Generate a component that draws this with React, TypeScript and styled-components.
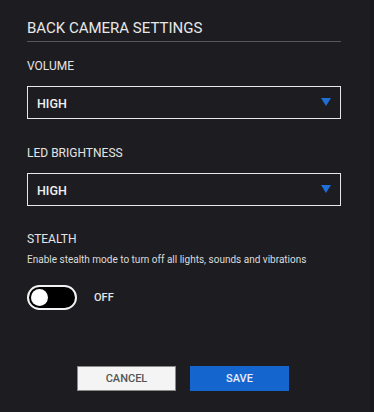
import { useState } from "react"
import styled, { createGlobalStyle } from "styled-components"

const GlobalStyle = createGlobalStyle`
  html, body {
    margin: 0;
    padding: 0;
    background: #1d1d21;
  }
  body {
    font-family: Roboto, "Liberation Sans", Arial, sans-serif;
  }
`

interface SelectFieldProps {
  label: string
  value: string
}

const SelectField = (props: SelectFieldProps) => {
  const { label, value } = props
  return (
    <Field>
      <FieldLabel>{label}</FieldLabel>
      <SelectBox>
        <SelectValue>{value}</SelectValue>
        <Caret viewBox="0 0 10 8">
          <path d="M0 0 H10 L5 8 Z" fill="#1f6fd6" />
        </Caret>
      </SelectBox>
    </Field>
  )
}

const App = () => {
  const [stealth, setStealth] = useState(false)

  return (
    <>
      <GlobalStyle />
      <Page>
        <Panel>
          <Title>BACK CAMERA SETTINGS</Title>
          <SelectField label="VOLUME" value="HIGH" />
          <SelectField label="LED BRIGHTNESS" value="HIGH" />
          <StealthSection>
            <FieldLabel>STEALTH</FieldLabel>
            <Hint>Enable stealth mode to turn off all lights, sounds and vibrations</Hint>
            <ToggleRow>
              <Toggle $on={stealth} onClick={() => setStealth((prev) => !prev)}>
                <Knob $on={stealth} />
              </Toggle>
              <ToggleText>{stealth ? "ON" : "OFF"}</ToggleText>
            </ToggleRow>
          </StealthSection>
          <Actions>
            <Button $variant="secondary">CANCEL</Button>
            <Button $variant="primary">SAVE</Button>
          </Actions>
        </Panel>
        <EdgeStrip />
      </Page>
    </>
  )
}

const Page = styled.div`
  display: flex;
  width: 374px;
  height: 412px;
  background: #1d1d21;
  overflow: hidden;
`

const Panel = styled.div`
  flex: 1 1 0px;
  display: flex;
  flex-direction: column;
  padding: 20px 29px 0 27px;
`

const EdgeStrip = styled.div`
  flex: none;
  width: 4px;
  background: #18181b;
`

const Title = styled.h1`
  margin: 0;
  padding-bottom: 5px;
  border-bottom: 1px solid #56585e;
  font-size: 15px;
  font-weight: 400;
  line-height: 16px;
  color: #e8e8e8;
`

const Field = styled.div`
  display: flex;
  flex-direction: column;
  margin-top: 17px;
  & + & {
    margin-top: 27px;
  }
`

const FieldLabel = styled.div`
  font-size: 12px;
  line-height: 14px;
  color: #e4e4e4;
`

const SelectBox = styled.div`
  display: flex;
  align-items: center;
  justify-content: space-between;
  box-sizing: border-box;
  margin-top: 13px;
  height: 33px;
  padding: 0 9px 0 9px;
  border: 1.5px solid #e8e8e8;
`

const SelectValue = styled.span`
  font-size: 12.5px;
  font-weight: 500;
  color: #f0f0f0;
  padding-top: 1px;
`

const Caret = styled.svg`
  width: 10px;
  height: 8px;
  margin-top: -2px;
`

const StealthSection = styled.div`
  display: flex;
  flex-direction: column;
  margin-top: 26px;
`

const Hint = styled.div`
  margin-top: 8px;
  font-size: 10px;
  line-height: 12px;
  color: #dcdcdc;
`

const ToggleRow = styled.div`
  display: flex;
  align-items: center;
  gap: 17px;
  margin-top: 19px;
`

const Toggle = styled.div<{ $on: boolean }>`
  box-sizing: border-box;
  width: 50px;
  height: 25px;
  border: 2px solid #f2f2f2;
  border-radius: 13px;
  background: ${(props) => (props.$on ? "#1f6fd6" : "#000")};
  display: flex;
  align-items: center;
  padding: 0 2px;
  justify-content: ${(props) => (props.$on ? "flex-end" : "flex-start")};
  cursor: pointer;
`

const Knob = styled.span<{ $on: boolean }>`
  width: 17px;
  height: 17px;
  border-radius: 50%;
  background: #fff;
`

const ToggleText = styled.span`
  font-size: 11px;
  font-weight: 500;
  color: #e4e4e4;
`

const Button = styled.button<{ $variant: "primary" | "secondary" }>`
  box-sizing: border-box;
  width: 99px;
  height: 25px;
  font-family: inherit;
  font-size: 11px;
  font-weight: 500;
  cursor: pointer;
  border: 1px solid ${(props) => (props.$variant === "primary" ? "#1565cf" : "#8a8a8a")};
  background: ${(props) => (props.$variant === "primary" ? "#1565cf" : "#f4f4f4")};
  color: ${(props) => (props.$variant === "primary" ? "#e8eefa" : "#555")};
`

const Actions = styled.div`
  display: flex;
  justify-content: center;
  gap: 14px;
  margin-top: 56px;
  padding-right: 2px;
`

export default App
